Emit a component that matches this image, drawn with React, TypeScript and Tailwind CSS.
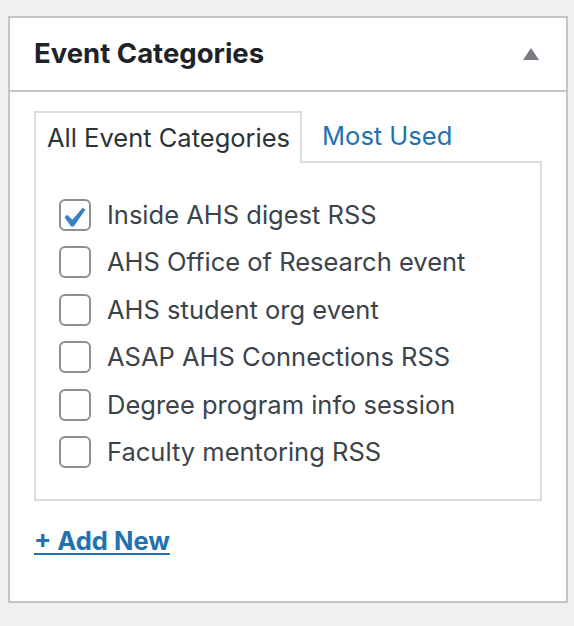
import { useState } from 'react';

const categories = [
  { name: 'Inside AHS digest RSS', checked: true },
  { name: 'AHS Office of Research event', checked: false },
  { name: 'AHS student org event', checked: false },
  { name: 'ASAP AHS Connections RSS', checked: false },
  { name: 'Degree program info session', checked: false },
  { name: 'Faculty mentoring RSS', checked: false },
];

function Checkbox({ checked }: { checked: boolean }) {
  return (
    <span className="relative h-[32px] w-[32px] shrink-0 rounded-[6px] border-2 border-[#8c8f94] bg-white">
      {checked && (
        <svg viewBox="0 0 20 20" className="absolute left-[-8px] top-[-3px] h-[40px] w-[40px]" fill="#3582c4">
          <path d="M14.83 4.89l1.34.94-5.81 8.38H9.02L5.78 9.67l1.34-1.25 2.57 2.4z" />
        </svg>
      )}
    </span>
  );
}

export default function App() {
  const [items] = useState(categories);

  return (
    <div className="min-h-[626px] bg-[#f0f0f1] pl-[8px] pt-[16px] font-['Inter',sans-serif]">
      <div className="w-[560px] border-2 border-[#c3c4c7] bg-white">
        <div className="flex h-[74px] items-center justify-between border-b-2 border-[#c3c4c7] pl-[24px] pr-[27px]">
          <h2 className="text-[27.5px] font-bold text-[#1d2327]">Event Categories</h2>
          <svg viewBox="0 0 16 12" className="h-[12px] w-[16px]" fill="#787c82">
            <path d="M8 0l8 12H0z" />
          </svg>
        </div>

        <div className="px-[24px] pb-[44px] pt-[19px]">
          <div className="flex items-end">
            <div className="relative -mb-[2px] flex h-[52px] items-center border-2 border-b-0 border-[#dcdcde] bg-white pl-[11px] pr-[10px] text-[25.5px] text-[#2c3338]">
              All Event Categories
            </div>
            <a href="#" className="flex h-[50px] items-center pl-[20px] text-[25.5px] text-[#2271b1]">
              Most Used
            </a>
          </div>
          <div className="flex flex-col gap-[15.4px] border-2 border-[#dcdcde] pb-[31px] pl-[23px] pt-[36px]">
            {items.map((c) => (
              <label key={c.name} className="flex items-center gap-[16px] text-[25.5px] text-[#3c434a]">
                <Checkbox checked={c.checked} />
                <span className="leading-[32px]">{c.name}</span>
              </label>
            ))}
          </div>
          <a href="#" className="mt-[24px] inline-block text-[25.5px] font-bold leading-[32px] text-[#2271b1] underline underline-offset-[3px]">
            + Add New
          </a>
        </div>
      </div>
    </div>
  );
}
